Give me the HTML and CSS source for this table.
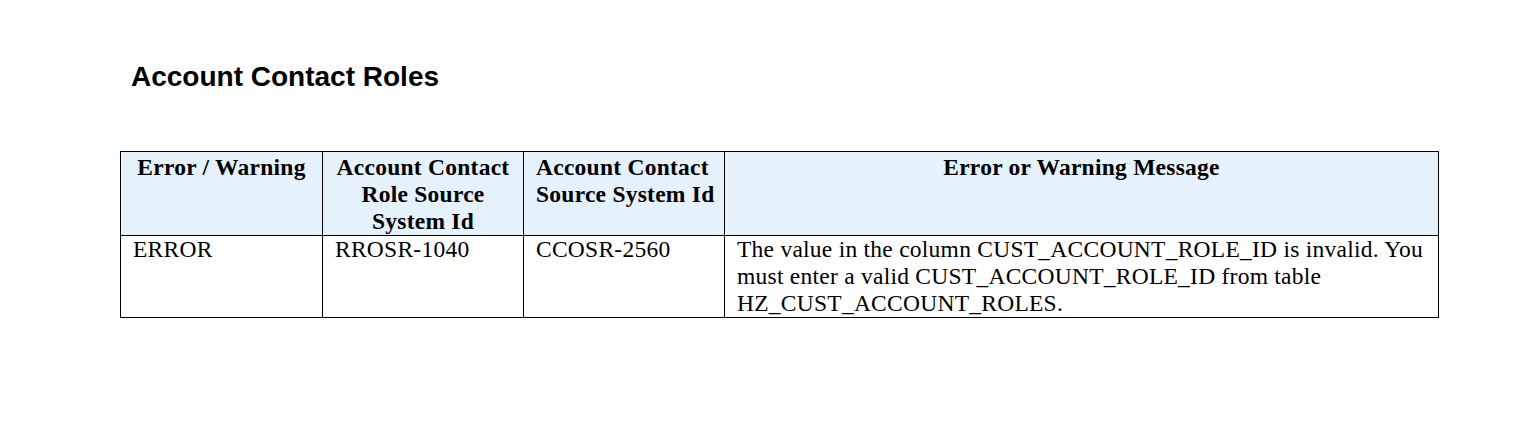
FILE: index.html
```html
<!DOCTYPE html>
<html>
<head>
<meta charset="utf-8">
<link rel="stylesheet" href="styles.css">
</head>
<body>
<div class="page">
  <h1 class="title">Account Contact Roles</h1>
  <table class="grid">
    <colgroup>
      <col class="c1"><col class="c2"><col class="c3"><col class="c4">
    </colgroup>
    <thead>
      <tr>
        <th>Error / Warning</th>
        <th>Account Contact Role Source System Id</th>
        <th class="left">Account Contact Source System Id</th>
        <th>Error or Warning Message</th>
      </tr>
    </thead>
    <tbody>
      <tr>
        <td>ERROR</td>
        <td>RROSR-1040</td>
        <td>CCOSR-2560</td>
        <td>The value in the column CUST_ACCOUNT_ROLE_ID is invalid. You must enter a valid CUST_ACCOUNT_ROLE_ID from table HZ_CUST_ACCOUNT_ROLES.</td>
      </tr>
    </tbody>
  </table>
</div>
</body>
</html>
```

FILE: styles.css
```css
html, body {
  margin: 0;
  padding: 0;
  background: #ffffff;
}

.page {
  padding: 61px 0 0 120px;
}

.title {
  margin: 0 0 0 11px;
  font-family: "Liberation Sans", Arial, sans-serif;
  font-weight: bold;
  font-size: 28px;
  line-height: 31px;
  color: #000;
}

.grid {
  margin-top: 59px;
  width: 1318px;
  table-layout: fixed;
  border-collapse: collapse;
  font-family: "Liberation Serif", "Times New Roman", serif;
  font-size: 23.5px;
  letter-spacing: 0.25px;
  line-height: 27px;
  color: #000;
}

.c1 { width: 202px; }
.c2 { width: 201px; }
.c3 { width: 201px; }
.c4 { width: 714px; }

.grid th,
.grid td {
  border: 1px solid #000;
  vertical-align: top;
}

.grid th {
  background: #e5f1fb;
  font-weight: bold;
  text-align: center;
  padding: 2px 9px 0 9px;
  height: 81px;
}

.grid th.left {
  text-align: left;
  padding-left: 12px;
  padding-right: 4px;
}

.grid td {
  text-align: left;
  padding: 0 6px 0 12px;
  height: 79px;
}
```
